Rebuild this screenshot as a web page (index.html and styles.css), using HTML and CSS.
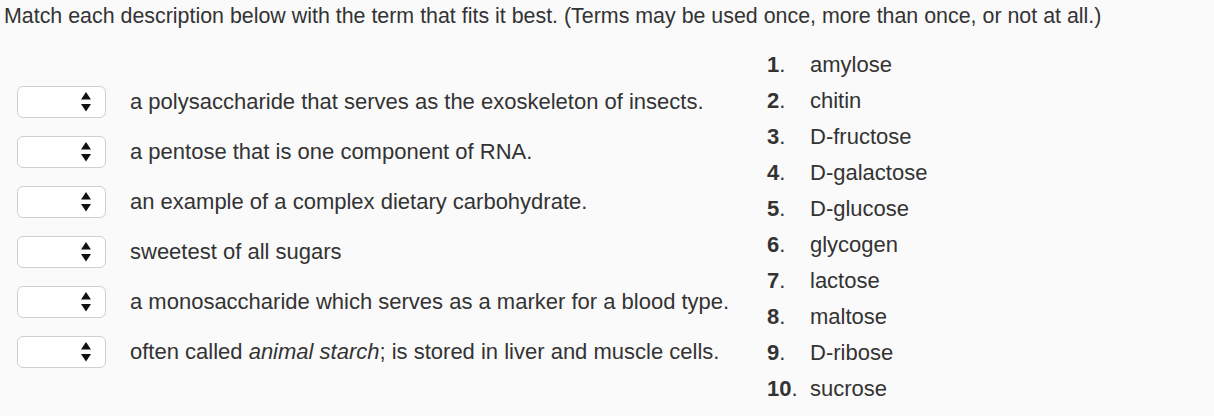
FILE: index.html
```html
<!DOCTYPE html>
<html>
<head>
<meta charset="utf-8">
<link rel="stylesheet" href="styles.css">
</head>
<body>
<p class="prompt">Match each description below with the term that fits it best. (Terms may be used once, more than once, or not at all.)</p>
<div class="matching">
  <div class="questions">
    <div class="q"><span class="sel"><svg class="arrows" width="10" height="20" viewBox="0 0 10 20"><path d="M5 0 L10 7.5 L0 7.5Z M0 12 L10 12 L5 19.5Z" fill="#111"/></svg></span><span class="desc">a polysaccharide that serves as the exoskeleton of insects.</span></div>
    <div class="q"><span class="sel"><svg class="arrows" width="10" height="20" viewBox="0 0 10 20"><path d="M5 0 L10 7.5 L0 7.5Z M0 12 L10 12 L5 19.5Z" fill="#111"/></svg></span><span class="desc">a pentose that is one component of RNA.</span></div>
    <div class="q"><span class="sel"><svg class="arrows" width="10" height="20" viewBox="0 0 10 20"><path d="M5 0 L10 7.5 L0 7.5Z M0 12 L10 12 L5 19.5Z" fill="#111"/></svg></span><span class="desc">an example of a complex dietary carbohydrate.</span></div>
    <div class="q"><span class="sel"><svg class="arrows" width="10" height="20" viewBox="0 0 10 20"><path d="M5 0 L10 7.5 L0 7.5Z M0 12 L10 12 L5 19.5Z" fill="#111"/></svg></span><span class="desc">sweetest of all sugars</span></div>
    <div class="q"><span class="sel"><svg class="arrows" width="10" height="20" viewBox="0 0 10 20"><path d="M5 0 L10 7.5 L0 7.5Z M0 12 L10 12 L5 19.5Z" fill="#111"/></svg></span><span class="desc">a monosaccharide which serves as a marker for a blood type.</span></div>
    <div class="q"><span class="sel"><svg class="arrows" width="10" height="20" viewBox="0 0 10 20"><path d="M5 0 L10 7.5 L0 7.5Z M0 12 L10 12 L5 19.5Z" fill="#111"/></svg></span><span class="desc">often called <em>animal starch</em>; is stored in liver and muscle cells.</span></div>
  </div>
  <ol class="terms">
    <li><span class="num"><b>1</b>.</span><span class="term">amylose</span></li>
    <li><span class="num"><b>2</b>.</span><span class="term">chitin</span></li>
    <li><span class="num"><b>3</b>.</span><span class="term">D-fructose</span></li>
    <li><span class="num"><b>4</b>.</span><span class="term">D-galactose</span></li>
    <li><span class="num"><b>5</b>.</span><span class="term">D-glucose</span></li>
    <li><span class="num"><b>6</b>.</span><span class="term">glycogen</span></li>
    <li><span class="num"><b>7</b>.</span><span class="term">lactose</span></li>
    <li><span class="num"><b>8</b>.</span><span class="term">maltose</span></li>
    <li><span class="num"><b>9</b>.</span><span class="term">D-ribose</span></li>
    <li><span class="num"><b>10</b>.</span><span class="term">sucrose</span></li>
  </ol>
</div>
</body>
</html>
```
FILE: styles.css
```css
html, body {
  margin: 0;
  padding: 0;
  background: #fafafa;
}
body {
  font-family: "Liberation Sans", Arial, Helvetica, sans-serif;
  color: #333;
  font-size: 22px;
}
.prompt {
  margin: 0;
  padding: 0 0 0 4px;
  font-size: 21.4px;
  line-height: 32px;
}
.matching {
  display: flex;
  padding-top: 15px;
}
.questions {
  width: 767px;
  padding-top: 30px;
}
.q {
  display: flex;
  align-items: center;
  height: 50px;
}
.sel {
  box-sizing: border-box;
  width: 89px;
  height: 32px;
  margin-left: 17px;
  margin-right: 24px;
  border: 1px solid #cfcfcf;
  border-radius: 6px;
  background: #fff;
  display: flex;
  align-items: center;
  justify-content: flex-end;
  padding-right: 14px;
}
.arrows { display: block; }
.desc em { font-style: italic; }
.terms {
  list-style: none;
  margin: 0;
  padding: 0;
}
.terms li {
  display: flex;
  height: 36px;
  line-height: 36px;
}
.num {
  width: 43px;
}
.num b { font-weight: bold; }
```
